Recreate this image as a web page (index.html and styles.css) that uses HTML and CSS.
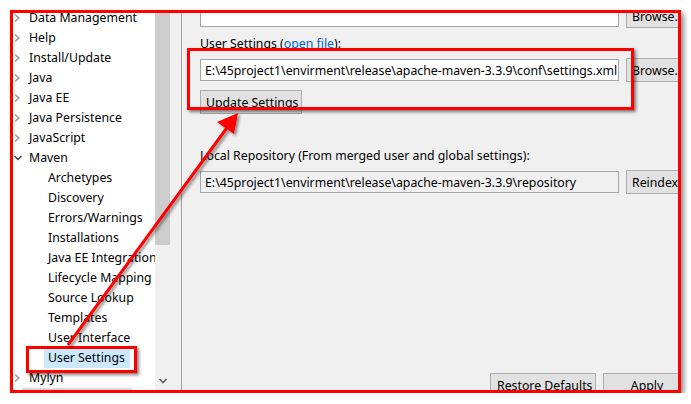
FILE: index.html
```html
<!DOCTYPE html>
<html lang="en">
<head>
    <meta charset="UTF-8">
    <title>Preferences - Maven User Settings</title>
    <link rel="stylesheet" href="styles.css">
</head>
<body>
    <div class="frame">
        <div class="dialog">
            <div class="tree-pane">
                <ul class="tree">
                    <li class="node"><span class="twisty"><svg width="8" height="10" viewBox="0 0 8 10"><polyline points="2,1.5 6,5 2,8.5" /></svg></span>Data Management</li>
                    <li class="node"><span class="twisty"><svg width="8" height="10" viewBox="0 0 8 10"><polyline points="2,1.5 6,5 2,8.5" /></svg></span>Help</li>
                    <li class="node"><span class="twisty"><svg width="8" height="10" viewBox="0 0 8 10"><polyline points="2,1.5 6,5 2,8.5" /></svg></span>Install/Update</li>
                    <li class="node"><span class="twisty"><svg width="8" height="10" viewBox="0 0 8 10"><polyline points="2,1.5 6,5 2,8.5" /></svg></span>Java</li>
                    <li class="node"><span class="twisty"><svg width="8" height="10" viewBox="0 0 8 10"><polyline points="2,1.5 6,5 2,8.5" /></svg></span>Java EE</li>
                    <li class="node"><span class="twisty"><svg width="8" height="10" viewBox="0 0 8 10"><polyline points="2,1.5 6,5 2,8.5" /></svg></span>Java Persistence</li>
                    <li class="node"><span class="twisty"><svg width="8" height="10" viewBox="0 0 8 10"><polyline points="2,1.5 6,5 2,8.5" /></svg></span>JavaScript</li>
                    <li class="node open"><span class="twisty"><svg width="10" height="10" viewBox="0 0 10 10"><polyline points="1.5,3 5,6.5 8.5,3" /></svg></span>Maven</li>
                    <li class="leaf"><span class="label">Archetypes</span></li>
                    <li class="leaf"><span class="label">Discovery</span></li>
                    <li class="leaf"><span class="label">Errors/Warnings</span></li>
                    <li class="leaf"><span class="label">Installations</span></li>
                    <li class="leaf"><span class="label">Java EE Integration</span></li>
                    <li class="leaf"><span class="label">Lifecycle Mapping</span></li>
                    <li class="leaf"><span class="label">Source Lookup</span></li>
                    <li class="leaf"><span class="label">Templates</span></li>
                    <li class="leaf"><span class="label">User Interface</span></li>
                    <li class="leaf selected"><span class="label">User Settings</span></li>
                    <li class="node"><span class="twisty"><svg width="8" height="10" viewBox="0 0 8 10"><polyline points="2,1.5 6,5 2,8.5" /></svg></span>Mylyn</li>
                </ul>
                <div class="hscroll"></div>
            </div>
            <div class="vscroll">
                <div class="thumb"></div>
                <div class="track">
                    <svg width="10" height="8" viewBox="0 0 10 8"><polyline points="1.5,2 5,5.5 8.5,2" /></svg>
                </div>
            </div>
            <div class="sash"></div>
            <div class="page">
                <div class="field-row first">
                    <div class="field"></div>
                    <button class="btn browse">Browse...</button>
                </div>
                <div class="caption">User Settings (<a href="#">open file</a>):</div>
                <div class="field-row">
                    <div class="field">E:\45project1\envirment\release\apache-maven-3.3.9\conf\settings.xml</div>
                    <button class="btn browse">Browse...</button>
                </div>
                <button class="btn update">Update Settings</button>
                <div class="caption local">Local Repository (From merged user and global settings):</div>
                <div class="field-row">
                    <div class="field readonly">E:\45project1\envirment\release\apache-maven-3.3.9\repository</div>
                    <button class="btn browse">Reindex</button>
                </div>
                <div class="actions">
                    <button class="btn restore">Restore Defaults</button>
                    <button class="btn apply">Apply</button>
                </div>
            </div>
        </div>
    </div>

    <!-- annotations drawn on top of the screenshot -->
    <div class="mark mark-settings"></div>
    <div class="mark mark-tree"></div>
    <svg class="arrow" width="691" height="404" viewBox="0 0 691 404">
        <defs>
            <filter id="drop" x="-20%" y="-20%" width="140%" height="140%">
                <feDropShadow dx="2" dy="2" stdDeviation="1.5" flood-color="#000" flood-opacity="0.45" />
            </filter>
        </defs>
        <g filter="url(#drop)">
            <line x1="68" y1="345" x2="229" y2="125" stroke="#ff0000" stroke-width="3" />
            <polygon points="238,113 234,134 217,122" fill="#ff0000" />
        </g>
    </svg>
</body>
</html>
```

FILE: styles.css
```css
body {
    margin: 0;
    background: white;
    font-family: 'Noto Sans', 'Open Sans', sans-serif;
    font-size: 12.3px;
    color: #000;
}

.frame {
    position: relative;
    margin: 10px 0 0 10px;
    width: 665px;
    height: 377px;
    border: 3px solid #ff0000;
    box-shadow: 3px 3px 5px rgba(0, 0, 0, 0.45);
    overflow: hidden;
}

.dialog {
    display: flex;
    height: 100%;
    background: #f0f0f0;
}

/* left tree */
.tree-pane {
    position: relative;
    width: 142px;
    background: white;
    overflow: hidden;
    flex-shrink: 0;
}

.tree {
    list-style: none;
    margin: -5px 0 0 0;
    padding: 0;
    white-space: nowrap;
}

.tree li {
    height: 20px;
    line-height: 20px;
    display: flex;
    align-items: center;
}

.twisty {
    width: 16px;
    display: flex;
    align-items: center;
    flex-shrink: 0;
}

.twisty svg {
    fill: none;
    stroke: #9a9a9a;
    stroke-width: 1.4;
}

.node.open .twisty svg {
    stroke: #404040;
}

.leaf {
    padding-left: 31px;
}

.leaf .label {
    padding: 0 4px;
    height: 20px;
}

.leaf.selected .label {
    background: #cce8ff;
    padding-right: 5px;
}

.hscroll {
    position: absolute;
    left: 9px;
    bottom: 0;
    width: 110px;
    height: 2px;
    background: #dadada;
}

.vscroll {
    width: 15px;
    background: #f0f0f0;
    display: flex;
    flex-direction: column;
    flex-shrink: 0;
}

.vscroll .thumb {
    height: 232px;
    background: #cdcdcd;
}

.vscroll .track {
    flex: 1;
    display: flex;
    align-items: flex-end;
    justify-content: center;
    padding-bottom: 5px;
}

.vscroll .track svg {
    fill: none;
    stroke: #606060;
    stroke-width: 1.6;
}

.sash {
    width: 11px;
    border-right: 1px solid #a0a0a0;
    flex-shrink: 0;
}

/* right page */
.page {
    padding: 0 0 0 18px;
    display: flex;
    flex-direction: column;
    align-items: flex-start;
    flex: 1;
    min-width: 0;
}

.field-row {
    display: flex;
    align-items: center;
    gap: 7px;
    height: 24px;
    margin-top: 7px;
}

.field-row.first {
    margin-top: -9px;
}

.field {
    width: 410px;
    height: 20px;
    line-height: 21px;
    padding: 0 3px 0 4px;
    background: white;
    border: 1px solid #a5a5a5;
    white-space: nowrap;
    overflow: hidden;
}

.field.readonly {
    background: #f0f0f0;
}

.btn {
    font: inherit;
    color: #000;
    height: 24px;
    padding: 1px 5px 0;
    background: #e1e1e1;
    border: 1px solid #adadad;
    white-space: nowrap;
    text-align: left;
    flex-shrink: 0;
}

.browse {
    width: 75px;
}

.caption {
    height: 16px;
    line-height: 17px;
    margin-top: 7px;
}

.caption a {
    color: #0066cc;
    text-decoration: none;
}

.caption.local {
    margin-top: 33px;
}

.update {
    margin-top: 8px;
    width: 102px;
}

.actions {
    display: flex;
    gap: 7px;
    margin-top: 179px;
    padding-left: 290px;
}

.restore {
    width: 106px;
    padding-left: 6px;
}

.apply {
    width: 88px;
    text-align: center;
}

/* annotation overlays */
.mark {
    position: absolute;
    border: 3px solid #ff0000;
    box-shadow: 2px 2px 3px rgba(0, 0, 0, 0.5);
}

.mark-settings {
    left: 187px;
    top: 48px;
    width: 441px;
    height: 56px;
}

.mark-tree {
    left: 26px;
    top: 346px;
    width: 105px;
    height: 21px;
}

.arrow {
    position: absolute;
    left: 0;
    top: 0;
    pointer-events: none;
}
```
